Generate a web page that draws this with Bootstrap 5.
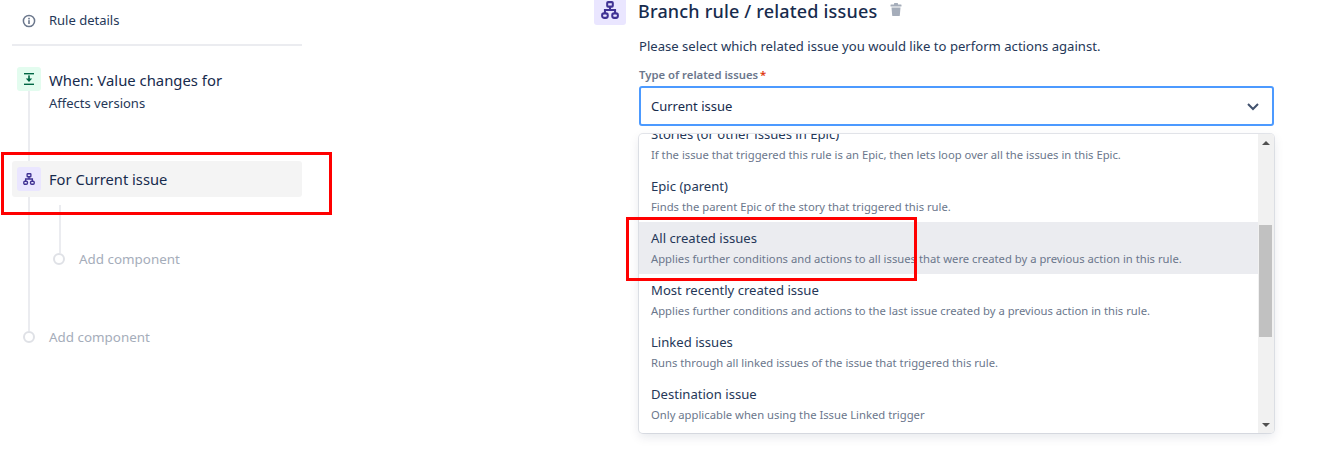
<!DOCTYPE html>
<html lang="en">
<head>
    <meta charset="UTF-8">
    <title>Branch rule</title>
    <link href="https://cdn.jsdelivr.net/npm/bootstrap@5.3.0/dist/css/bootstrap.min.css" rel="stylesheet">
    <style>
        html, body { height: 468px; overflow: hidden; }
        body {
            background: #fff;
            color: #172b4d;
            font-family: "Noto Sans", "Open Sans", sans-serif;
            font-size: 14px;
        }
        .page-wrap { position: relative; height: 468px; padding-left: 12px; overflow: hidden; }

        /* left rail */
        .rail { width: 290px; position: relative; flex: none; }
        .rail-head { height: 44px; padding-left: 5px; padding-bottom: 2px; font-size: 13px; color: #253858; }
        .rail-head .ico-slot { width: 24px; }
        .rail-rule { height: 2px; background: #ebecf0; }
        .step { padding-left: 5px; gap: 8px; position: relative; z-index: 1; }
        .step-when { margin-top: 21px; height: 94px; }
        .step-for { height: 36px; background: #f4f4f4; border-radius: 3px; }
        .step-icon { width: 24px; height: 24px; border-radius: 3px; flex: none; }
        .icon-green { background: #e3fcef; }
        .icon-purple { background: #eae6ff; }
        .step-title { font-size: 14.7px; line-height: 24px; }
        .step-when .step-title { padding-top: 1px; font-size: 14.85px; }
        .step-sub { font-size: 13px; line-height: 18px; margin-top: 2px; color: #253858; }
        .add-row { color: #a5adba; font-size: 13.4px; gap: 14px; position: relative; z-index: 1; }
        .add-dot { width: 12px; height: 12px; border: 2px solid #dfe1e6; border-radius: 50%; background: #fff; flex: none; }
        .add-nested { margin-top: 52px; padding-left: 41px; height: 20px; }
        .add-main { margin-top: 58px; padding-left: 11px; height: 20px; }
        .line-main { position: absolute; left: 16px; top: 91px; width: 2px; height: 240px; background: #ebecf0; }
        .line-nested { position: absolute; left: 47px; top: 205px; width: 2px; height: 48px; background: #ebecf0; }

        /* right form */
        .panel { width: 680px; margin-left: 292px; margin-top: -7px; flex: none; }
        .panel-head { height: 32px; }
        .panel-icon { width: 32px; height: 32px; border-radius: 3px; background: #eae6ff; flex: none; }
        .panel-icon svg { margin-top: 2px; }
        .panel-title { font-size: 18px; font-weight: 500; line-height: 32px; margin: 2px 0 0 12px; color: #172b4d; letter-spacing: .18px; }
        .panel-trash { margin: 10px 0 0 13px; }
        .panel-body { padding-left: 45px; }
        .panel-desc { font-size: 13.1px; line-height: 20px; margin-top: 11px; color: #253858; }
        .panel-label { font-size: 11.3px; font-weight: 600; line-height: 16px; margin-top: 11px; color: #6b778c; }
        .panel-label span { color: #de350b; margin-left: -1px; }
        .pick-box { height: 40px; margin-top: 3px; border: 2px solid #4c9aff; border-radius: 3px; padding: 1px 12px 0 10px; font-size: 13px; }
        .pick-menu { position: relative; height: 299px; margin-top: 8px; border-radius: 4px; overflow: hidden; background: #fff; box-shadow: 0 0 0 1px rgba(9,30,66,.1), 0 4px 11px rgba(9,30,66,.1); }
        .pick-list { margin-top: -16px; margin-right: 16px; }
        .pick-item { height: 52px; padding: 6px 12px; }
        .pick-item.hot { background: #ebecf0; }
        .pick-name { font-size: 13.1px; line-height: 20px; color: #253858; }
        .pick-help { font-size: 11.25px; line-height: 16px; margin-top: 3px; color: #6b778c; }
        .fake-bar { position: absolute; top: 0; right: 0; bottom: 0; width: 16px; background: #f1f1f1; }
        .fake-thumb { position: absolute; left: 1px; top: 91px; width: 13px; height: 112px; background: #c1c1c1; }
        .arrow-up, .arrow-down { position: absolute; left: 4px; width: 0; height: 0; border-left: 4px solid transparent; border-right: 4px solid transparent; }
        .arrow-up { top: 7px; border-bottom: 4px solid #505050; }
        .arrow-down { bottom: 6px; border-top: 4px solid #505050; }

        /* annotation boxes */
        .mark-red { position: absolute; border: 3px solid #f00; pointer-events: none; z-index: 5; }
        .mark-left { left: 1px; top: 152px; width: 331px; height: 63px; }
        .mark-right { left: 626px; top: 217px; width: 291px; height: 64px; }
    </style>
</head>
<body>
    <div class="page-wrap d-flex align-items-start">
        <div class="rail">
            <div class="line-main"></div>
            <div class="line-nested"></div>

            <div class="rail-head d-flex align-items-center gap-2">
                <div class="ico-slot d-flex justify-content-center">
                    <svg width="14" height="14" viewBox="0 0 14 14" fill="none">
                        <circle cx="7" cy="7" r="5.6" stroke="#6b778c" stroke-width="1.5"/>
                        <rect x="6.2" y="6.2" width="1.6" height="3.8" fill="#6b778c"/>
                        <rect x="6.2" y="3.8" width="1.6" height="1.6" fill="#6b778c"/>
                    </svg>
                </div>
                <span>Rule details</span>
            </div>
            <div class="rail-rule"></div>

            <div class="step step-when d-flex">
                <div class="step-icon icon-green d-flex align-items-center justify-content-center">
                    <svg width="12" height="14" viewBox="0 0 12 14" fill="#006644">
                        <rect x="1" y="1" width="10" height="1.4"/>
                        <rect x="1" y="11.6" width="10" height="1.4"/>
                        <rect x="5.2" y="3.4" width="1.6" height="4"/>
                        <path d="M2.8 6.6h6.4L6 10z"/>
                    </svg>
                </div>
                <div>
                    <div class="step-title">When: Value changes for</div>
                    <div class="step-sub">Affects versions</div>
                </div>
            </div>

            <div class="step step-for d-flex align-items-center">
                <div class="step-icon icon-purple d-flex align-items-center justify-content-center">
                    <svg width="12" height="12" viewBox="0 0 16 16" fill="none" stroke="#403294" stroke-width="1.8">
                        <rect x="5.5" y="1" width="5" height="4" rx=".8"/>
                        <rect x="1" y="11" width="5" height="4" rx="1.6"/>
                        <rect x="10" y="11" width="5" height="4" rx="1.6"/>
                        <path d="M8 5v3M3.5 11V8h9v3"/>
                    </svg>
                </div>
                <div class="step-title">For Current issue</div>
            </div>

            <div class="add-row add-nested d-flex align-items-center"><span class="add-dot"></span><span>Add component</span></div>
            <div class="add-row add-main d-flex align-items-center"><span class="add-dot"></span><span>Add component</span></div>
        </div>

        <div class="panel">
            <div class="panel-head d-flex align-items-start">
                <div class="panel-icon d-flex align-items-center justify-content-center">
                    <svg width="18" height="18" viewBox="0 0 16 16" fill="none" stroke="#403294" stroke-width="1.8">
                        <rect x="5.5" y="1" width="5" height="4" rx=".8"/>
                        <rect x="1" y="11" width="5" height="4" rx="1.6"/>
                        <rect x="10" y="11" width="5" height="4" rx="1.6"/>
                        <path d="M8 5v3M3.5 11V8h9v3"/>
                    </svg>
                </div>
                <h1 class="panel-title">Branch rule / related issues</h1>
                <svg class="panel-trash" width="12" height="13" viewBox="0 0 12 13" fill="#a5adba">
                    <rect x="0.5" y="1.5" width="11" height="2" rx=".5"/>
                    <rect x="4" y="0" width="4" height="2" rx=".5"/>
                    <path d="M1.5 4.4h9l-.7 8a.7.7 0 0 1-.7.6H2.9a.7.7 0 0 1-.7-.6z"/>
                </svg>
            </div>

            <div class="panel-body">
                <div class="panel-desc">Please select which related issue you would like to perform actions against.</div>
                <div class="panel-label">Type of related issues <span>*</span></div>
                <div class="pick-box d-flex align-items-center justify-content-between">
                    <span>Current issue</span>
                    <svg width="14" height="10" viewBox="0 0 14 10" fill="none" stroke="#42526e" stroke-width="2">
                        <path d="M2 2l5 5 5-5"/>
                    </svg>
                </div>
                <div class="pick-menu">
                    <div class="pick-list">
                        <div class="pick-item">
                            <div class="pick-name">Stories (or other issues in Epic)</div>
                            <div class="pick-help">If the issue that triggered this rule is an Epic, then lets loop over all the issues in this Epic.</div>
                        </div>
                        <div class="pick-item">
                            <div class="pick-name">Epic (parent)</div>
                            <div class="pick-help">Finds the parent Epic of the story that triggered this rule.</div>
                        </div>
                        <div class="pick-item hot">
                            <div class="pick-name">All created issues</div>
                            <div class="pick-help">Applies further conditions and actions to all issues that were created by a previous action in this rule.</div>
                        </div>
                        <div class="pick-item">
                            <div class="pick-name">Most recently created issue</div>
                            <div class="pick-help">Applies further conditions and actions to the last issue created by a previous action in this rule.</div>
                        </div>
                        <div class="pick-item">
                            <div class="pick-name">Linked issues</div>
                            <div class="pick-help">Runs through all linked issues of the issue that triggered this rule.</div>
                        </div>
                        <div class="pick-item">
                            <div class="pick-name">Destination issue</div>
                            <div class="pick-help">Only applicable when using the Issue Linked trigger</div>
                        </div>
                    </div>
                    <div class="fake-bar">
                        <div class="arrow-up"></div>
                        <div class="fake-thumb"></div>
                        <div class="arrow-down"></div>
                    </div>
                </div>
            </div>
        </div>

        <div class="mark-red mark-left"></div>
        <div class="mark-red mark-right"></div>
    </div>
    <script src="https://cdn.jsdelivr.net/npm/bootstrap@5.3.0/dist/js/bootstrap.bundle.min.js"></script>
</body>
</html>
